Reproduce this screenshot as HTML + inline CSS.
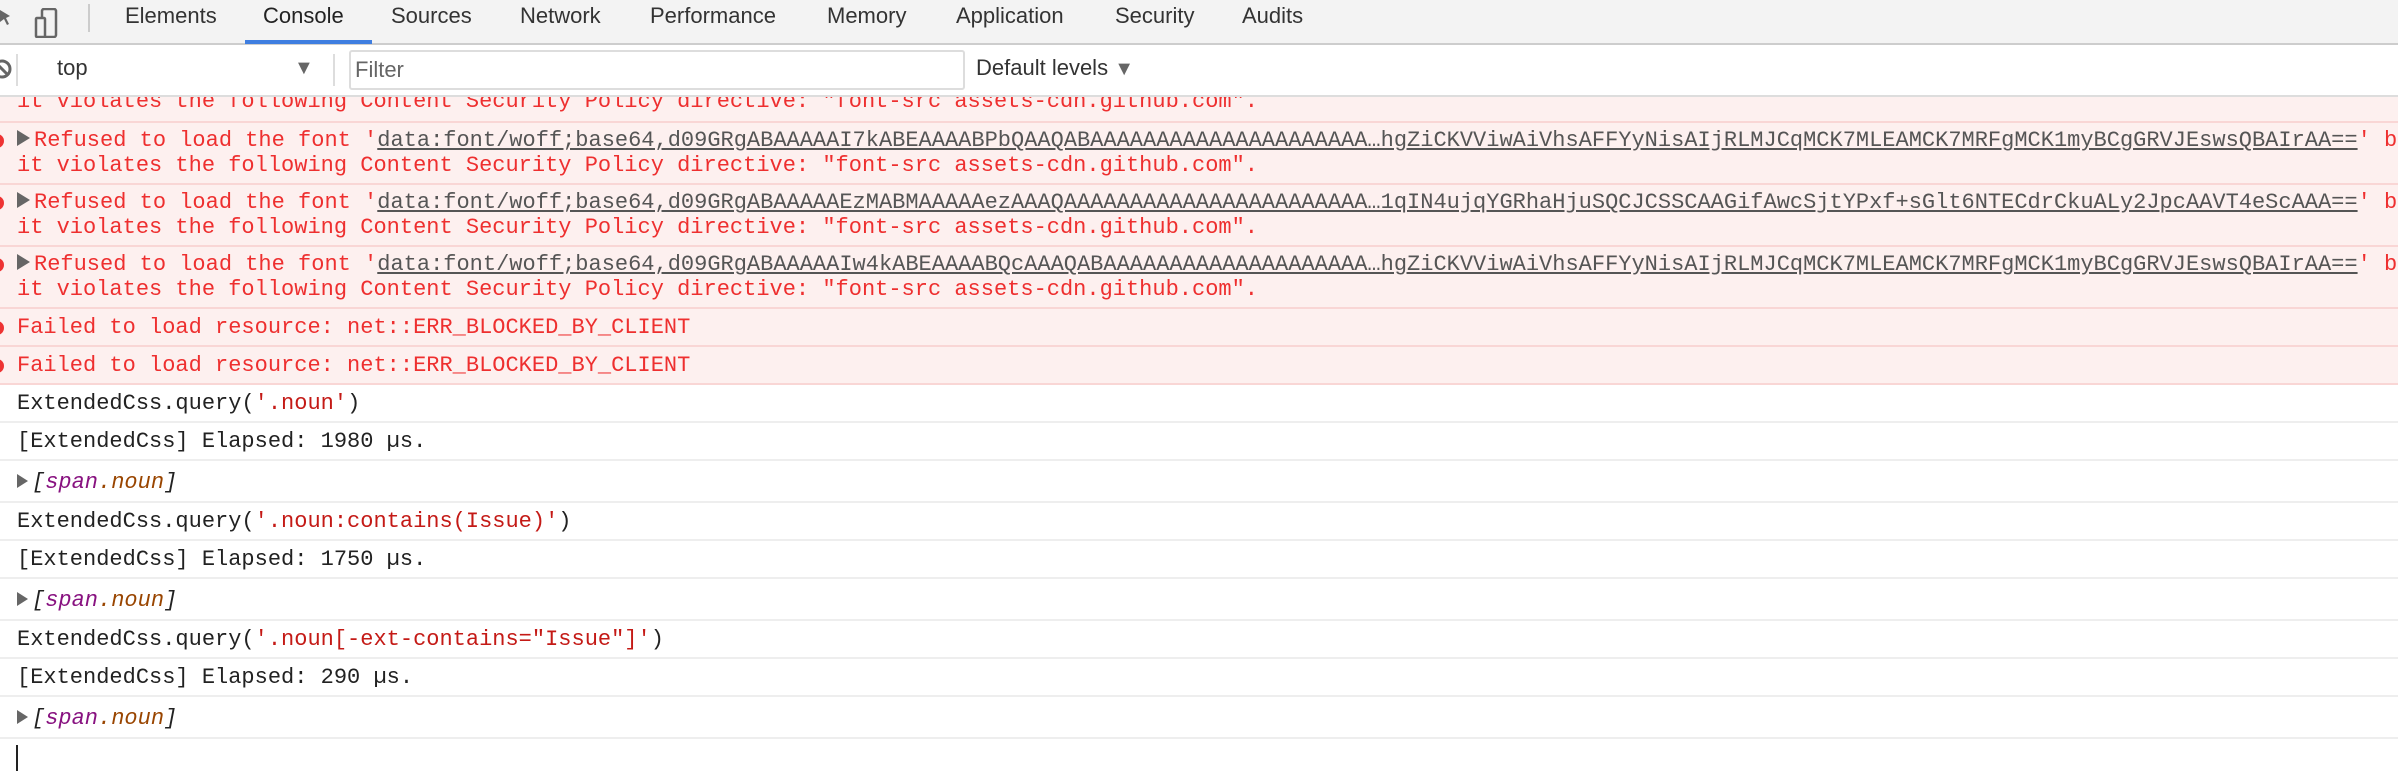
<!DOCTYPE html>
<html><head><meta charset="utf-8"><style>
body{margin:0;width:2398px;height:782px;overflow:hidden;background:#fff;font-family:"Liberation Sans",sans-serif;position:relative}
.tabs{position:absolute;left:0;top:0;width:2398px;height:43px;background:#f3f3f3;border-bottom:2px solid #cdcdcd}
.tab{position:absolute;top:0;height:43px;line-height:32px;font-size:22px;color:#333}
.tb{position:absolute;left:0;top:45px;width:2398px;height:50px;background:#fff;border-bottom:2px solid #ddd}
.rows{position:absolute;left:0;top:97px;width:2398px}
.r{position:relative;white-space:nowrap;overflow:hidden;font-family:"Liberation Mono",monospace;font-size:22px;line-height:25px;box-sizing:border-box;color:#222}
.e{background:#fdf0ef;border-bottom:2px solid #f9d6d5;color:#ee2f2f}
.l{border-bottom:2px solid #eee}
.lk{color:#555;text-decoration:underline}
.tri{display:inline-block;width:0;height:0;border-left:13px solid #666;border-top:8px solid transparent;border-bottom:8px solid transparent;margin-right:4px;vertical-align:0px}
.ic{position:absolute;left:-10px;width:14px;height:14px;border-radius:50%;background:#e33}
.s{color:#c41a16}.p{color:#881280;font-style:italic}.n{color:#994500;font-style:italic}
</style></head><body>
<div class="tabs">
<svg style="position:absolute;left:0;top:8px" width="70" height="30"><path d="M0 2 L10 8 L6 10 L9 16 L7 17 L4 11 L0 14" fill="#666"/><rect x="42" y="1" width="14" height="28" rx="2" fill="none" stroke="#666" stroke-width="2.5"/><rect x="36" y="10" width="9" height="19" rx="1" fill="#f3f3f3" stroke="#666" stroke-width="2.5"/></svg>
<div style="position:absolute;left:88px;top:4px;width:2px;height:28px;background:#ccc"></div>
<div class="tab" style="left:125px">Elements</div>
<div class="tab" style="left:263px;color:#222">Console</div>
<div style="position:absolute;left:245px;top:40px;width:127px;height:4px;background:#3f7ee0"></div>
<div class="tab" style="left:391px">Sources</div>
<div class="tab" style="left:520px">Network</div>
<div class="tab" style="left:650px">Performance</div>
<div class="tab" style="left:827px">Memory</div>
<div class="tab" style="left:956px">Application</div>
<div class="tab" style="left:1115px">Security</div>
<div class="tab" style="left:1242px">Audits</div>
</div>
<div class="tb">
<svg style="position:absolute;left:-8px;top:14px" width="24" height="24"><circle cx="10" cy="10" r="8" fill="none" stroke="#666" stroke-width="3"/><line x1="4" y1="4" x2="16" y2="16" stroke="#666" stroke-width="3"/></svg>
<div style="position:absolute;left:16px;top:9px;width:2px;height:32px;background:#ddd"></div>
<div style="position:absolute;left:57px;top:10px;font-size:22px;color:#333">top</div>
<div style="position:absolute;left:294px;top:12px;font-size:20px;color:#666">▼</div>
<div style="position:absolute;left:333px;top:9px;width:2px;height:32px;background:#ddd"></div>
<div style="position:absolute;left:349px;top:5px;width:608px;height:36px;border:2px solid #ddd;border-radius:3px;font-size:22px;color:#666;line-height:36px;padding-left:4px;box-sizing:content-box">Filter</div>
<div style="position:absolute;left:976px;top:10px;font-size:22px;color:#333">Default levels <span style="color:#666;font-size:20px">▼</span></div>
</div>
<div class="rows">
<div class="r e" style="height:26px;padding-left:17px;line-height:14px"><span style="position:relative;top:-2px">it violates the following Content Security Policy directive: "font-src assets-cdn.github.com".</span></div>
<div class="r e" style="height:62px;padding:5px 0 0 17px"><span class="ic" style="top:11px"></span><span class="tri"></span>Refused to load the font '<span class="lk">data:font/woff;base64,d09GRgABAAAAAI7kABEAAAABPbQAAQABAAAAAAAAAAAAAAAAAAAAA…hgZiCKVViwAiVhsAFFYyNisAIjRLMJCqMCK7MLEAMCK7MRFgMCK1myBCgGRVJEswsQBAIrAA==</span>' because<br>it violates the following Content Security Policy directive: "font-src assets-cdn.github.com".</div>
<div class="r e" style="height:62px;padding:5px 0 0 17px"><span class="ic" style="top:11px"></span><span class="tri"></span>Refused to load the font '<span class="lk">data:font/woff;base64,d09GRgABAAAAAEzMABMAAAAAezAAAQAAAAAAAAAAAAAAAAAAAAAAA…1qIN4ujqYGRhaHjuSQCJCSSCAAGifAwcSjtYPxf+sGlt6NTECdrCkuALy2JpcAAVT4eScAAA==</span>' because<br>it violates the following Content Security Policy directive: "font-src assets-cdn.github.com".</div>
<div class="r e" style="height:62px;padding:5px 0 0 17px"><span class="ic" style="top:11px"></span><span class="tri"></span>Refused to load the font '<span class="lk">data:font/woff;base64,d09GRgABAAAAAIw4kABEAAAABQcAAAQABAAAAAAAAAAAAAAAAAAAA…hgZiCKVViwAiVhsAFFYyNisAIjRLMJCqMCK7MLEAMCK7MRFgMCK1myBCgGRVJEswsQBAIrAA==</span>' because<br>it violates the following Content Security Policy directive: "font-src assets-cdn.github.com".</div>
<div class="r e" style="height:38px;padding:6px 0 0 17px"><span class="ic" style="top:12px"></span>Failed to load resource: net::ERR_BLOCKED_BY_CLIENT</div>
<div class="r e" style="height:38px;padding:6px 0 0 17px"><span class="ic" style="top:12px"></span>Failed to load resource: net::ERR_BLOCKED_BY_CLIENT</div>
<div class="r l" style="height:38px;padding:6px 0 0 17px">ExtendedCss.query(<span class="s">'.noun'</span>)</div>
<div class="r l" style="height:38px;padding:6px 0 0 17px">[ExtendedCss] Elapsed: 1980 µs.</div>
<div class="r l" style="height:42px;padding:9px 0 0 17px"><span class="tri" style="border-left-width:11px;border-top-width:7px;border-bottom-width:7px"></span><i>[</i><span class="p">span</span><span class="n">.noun</span><i>]</i></div>
<div class="r l" style="height:38px;padding:6px 0 0 17px">ExtendedCss.query(<span class="s">'.noun:contains(Issue)'</span>)</div>
<div class="r l" style="height:38px;padding:6px 0 0 17px">[ExtendedCss] Elapsed: 1750 µs.</div>
<div class="r l" style="height:42px;padding:9px 0 0 17px"><span class="tri" style="border-left-width:11px;border-top-width:7px;border-bottom-width:7px"></span><i>[</i><span class="p">span</span><span class="n">.noun</span><i>]</i></div>
<div class="r l" style="height:38px;padding:6px 0 0 17px">ExtendedCss.query(<span class="s">'.noun[-ext-contains="Issue"]'</span>)</div>
<div class="r l" style="height:38px;padding:6px 0 0 17px">[ExtendedCss] Elapsed: 290 µs.</div>
<div class="r l" style="height:42px;padding:9px 0 0 17px"><span class="tri" style="border-left-width:11px;border-top-width:7px;border-bottom-width:7px"></span><i>[</i><span class="p">span</span><span class="n">.noun</span><i>]</i></div>
<div style="position:relative;height:40px"><div style="position:absolute;left:16px;top:6px;width:2px;height:26px;background:#222"></div></div>
</div>
</body></html>
